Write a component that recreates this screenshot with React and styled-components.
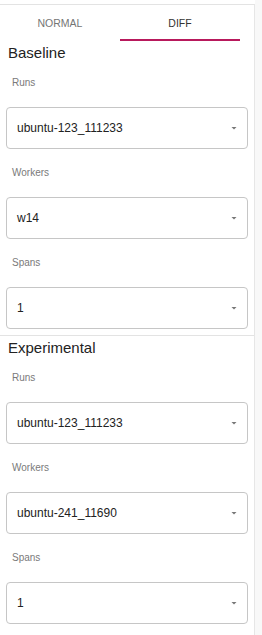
import styled, { createGlobalStyle } from "styled-components";
import { useState } from "react";

const GlobalStyle = createGlobalStyle`
  html, body {
    margin: 0;
    padding: 0;
    background: #fff;
  }

  body {
    font-family: "Liberation Sans", Arial, sans-serif;
  }
`;

const Page = styled.div`
  display: flex;
  height: 635px;
  overflow: hidden;
`;

const Panel = styled.div`
  width: 254px;
  flex-shrink: 0;
  margin-top: 4px;
  border-top: 1px solid #e3e3e3;
  border-right: 1px solid #e6e6e6;
  background: #fff;
`;

const Gutter = styled.div`
  flex: 1;
  background: #f8f8f8;
`;

const Tabs = styled.div`
  display: flex;
  height: 36px;
`;

const Tab = styled.button`
  width: 120px;
  border: 0;
  padding: 2px 0 0;
  background: none;
  font-family: inherit;
  font-size: 10.5px;
  text-transform: uppercase;
  color: ${({ active }) => (active ? "#333" : "#757575")};
  border-bottom: 2px solid ${({ active }) => (active ? "#b8195c" : "transparent")};
  cursor: pointer;
`;

const Section = styled.div`
  padding: 3px 0 6px;
  border-bottom: ${({ divided }) => (divided ? "1px solid #e3e3e3" : "0")};
`;

const Title = styled.div`
  padding-left: 8px;
  font-size: 15px;
  line-height: 18px;
  color: #222;
  margin-bottom: -3px;
`;

const Label = styled.div`
  padding: 18px 0 18px 12px;
  font-size: 10px;
  line-height: 12px;
  color: #7a7a7a;
`;

const SelectBox = styled.div`
  display: flex;
  align-items: center;
  justify-content: space-between;
  height: 42px;
  box-sizing: border-box;
  margin: 0 6px;
  padding: 0 7px 0 10px;
  border: 1px solid #c6c6c6;
  border-radius: 4px;
  font-size: 12px;
  color: #222;
`;

const Arrow = () => (
  <svg width="12" height="12" viewBox="0 0 24 24" fill="#777">
    <path d="M7 10l5 5 5-5z" />
  </svg>
);

const Field = ({ label, value }) => (
  <div>
    <Label>{label}</Label>
    <SelectBox>
      <span>{value}</span>
      <Arrow />
    </SelectBox>
  </div>
);

const groups = [
  {
    title: "Baseline",
    fields: [
      ["Runs", "ubuntu-123_111233"],
      ["Workers", "w14"],
      ["Spans", "1"],
    ],
  },
  {
    title: "Experimental",
    fields: [
      ["Runs", "ubuntu-123_111233"],
      ["Workers", "ubuntu-241_11690"],
      ["Spans", "1"],
    ],
  },
];

const App = () => {
  const [tab, setTab] = useState("diff");

  return (
    <Page>
      <GlobalStyle />
      <Panel>
        <Tabs>
          <Tab active={tab === "normal"} onClick={() => setTab("normal")}>
            Normal
          </Tab>
          <Tab active={tab === "diff"} onClick={() => setTab("diff")}>
            Diff
          </Tab>
        </Tabs>
        {groups.map((group, i) => (
          <Section key={group.title} divided={i === 0}>
            <Title>{group.title}</Title>
            {group.fields.map(([label, value]) => (
              <Field key={label} label={label} value={value} />
            ))}
          </Section>
        ))}
      </Panel>
      <Gutter />
    </Page>
  );
};

export default App;
